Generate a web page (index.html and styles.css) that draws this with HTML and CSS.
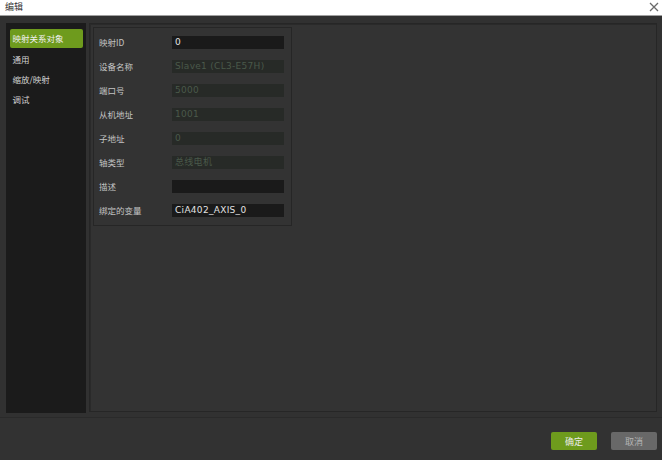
FILE: index.html
```html
<!DOCTYPE html>
<html lang="zh-CN">
<head>
<meta charset="utf-8">
<title>编辑</title>
<link rel="stylesheet" href="styles.css">
</head>
<body>
<div class="dialog">
  <div class="titlebar">
    <span class="title">编辑</span>
    <svg class="close" width="10" height="10" viewBox="0 0 10 10"><path d="M1 1L9 9M9 1L1 9" stroke="#6a6a6a" stroke-width="1.3" fill="none"/></svg>
  </div>
  <div class="content">
    <div class="sidebar">
      <div class="nav-item active">映射关系对象</div>
      <div class="nav-item">通用</div>
      <div class="nav-item">缩放/映射</div>
      <div class="nav-item">调试</div>
    </div>
    <div class="panel">
      <div class="formbox">
        <div class="row"><span class="label">映射ID</span><span class="input">0</span></div>
        <div class="row"><span class="label">设备名称</span><span class="input disabled">Slave1 (CL3-E57H)</span></div>
        <div class="row"><span class="label">端口号</span><span class="input disabled">5000</span></div>
        <div class="row"><span class="label">从机地址</span><span class="input disabled">1001</span></div>
        <div class="row"><span class="label">子地址</span><span class="input disabled">0</span></div>
        <div class="row"><span class="label">轴类型</span><span class="input disabled">总线电机</span></div>
        <div class="row"><span class="label">描述</span><span class="input"></span></div>
        <div class="row"><span class="label">绑定的变量</span><span class="input">CiA402_AXIS_0</span></div>
      </div>
    </div>
  </div>
  <div class="footer">
    <button class="btn ok">确定</button>
    <button class="btn cancel">取消</button>
  </div>
</div>
</body>
</html>
```
FILE: styles.css
```css
html, body {
  margin: 0;
  padding: 0;
}
body {
  width: 662px;
  height: 460px;
  background: #313131;
  font-family: "Noto Sans CJK SC", "Noto Sans", sans-serif;
  font-size: 8.5px;
  overflow: hidden;
}
.dialog {
  display: flex;
  flex-direction: column;
  height: 460px;
}
.titlebar {
  height: 15px;
  background: #ffffff;
  border-bottom: 1px solid #a0a0a0;
  display: flex;
  align-items: center;
  justify-content: space-between;
  padding: 0 3px 0 5px;
  color: #333;
  flex: none;
}
.title {
  font-size: 9px;
  line-height: 13px;
  align-self: flex-start;
}
.close {
  display: block;
  margin-top: -1px;
}
.content {
  display: flex;
  gap: 3px;
  padding: 7px 5px 0 6px;
  height: 390px;
  flex: none;
}
.sidebar {
  width: 80px;
  background: #1b1b1b;
  padding-top: 6px;
  box-sizing: border-box;
  display: flex;
  flex-direction: column;
  align-items: center;
}
.nav-item {
  width: 73px;
  height: 20px;
  line-height: 20px;
  box-sizing: border-box;
  padding-left: 3px;
  color: #d2d2d2;
  border-radius: 2px;
}
.nav-item.active {
  background: #6e9b1d;
  color: #f0f0f0;
  height: 19px;
  line-height: 19px;
  margin-bottom: 1px;
}
.panel {
  flex: 1;
  height: 389px;
  box-sizing: border-box;
  border: 1px solid #262626;
  box-shadow: inset 1px 1px 0 #2a2a2a;
  padding: 3px;
  background: #333333;
}
.formbox {
  width: 199px;
  height: 199px;
  box-sizing: border-box;
  border: 1px solid #262626;
  padding: 2px 7px 0 5px;
  display: flex;
  flex-direction: column;
}
.row {
  height: 24px;
  display: flex;
  align-items: center;
  justify-content: space-between;
  flex: none;
}
.label {
  color: #c4c4c4;
}
.input {
  width: 112px;
  height: 13px;
  line-height: 13px;
  background: #1a1a1a;
  color: #e2e2e2;
  padding-left: 3px;
  box-sizing: border-box;
  font-family: "DejaVu Sans", "Noto Sans CJK SC", sans-serif;
  font-size: 9px;
  letter-spacing: 0.3px;
  white-space: nowrap;
  overflow: hidden;
}
.input.disabled {
  background: #272a27;
  color: #4a594a;
}
.footer {
  flex: 1;
  border-top: 1px solid #2a2a2a;
  margin-top: 4px;
  display: flex;
  justify-content: flex-end;
  align-items: flex-start;
  gap: 14px;
  padding: 14px 5px 0 0;
  background: #323232;
}
.btn {
  width: 46px;
  height: 18px;
  border: none;
  border-radius: 2px;
  font-family: "Noto Sans CJK SC", "Noto Sans", sans-serif;
  font-size: 9px;
  padding: 0;
}
.btn.ok {
  background: #6e9b1d;
  color: #ececec;
}
.btn.cancel {
  background: #686868;
  color: #b4b4b4;
}
```
